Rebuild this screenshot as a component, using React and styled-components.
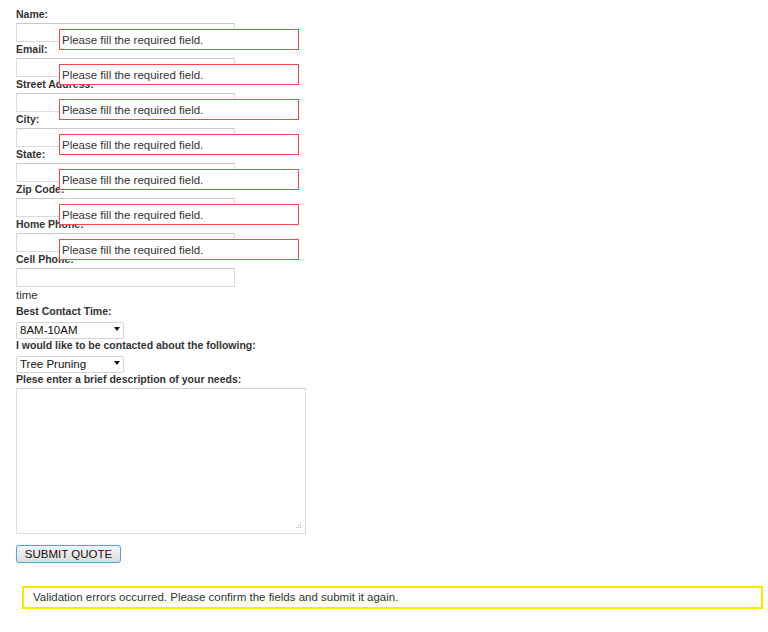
import React from 'react'
import styled, { createGlobalStyle } from 'styled-components'

const GlobalStyle = createGlobalStyle`
  html, body {
    margin: 0;
    padding: 0;
    background: #fff;
  }
  body {
    font-family: "Liberation Sans", Arial, sans-serif;
    color: #333;
  }
`

const fields = [
  { label: 'Name:', error: true },
  { label: 'Email:', error: true },
  { label: 'Street Address:', error: true },
  { label: 'City:', error: true },
  { label: 'State:', error: true },
  { label: 'Zip Code:', error: true },
  { label: 'Home Phone:', error: true },
  { label: 'Cell Phone:', error: false },
]

const App = () => {
  return (
    <>
      <GlobalStyle />
      <Page>
        <Form onSubmit={(e) => e.preventDefault()}>
          {fields.map((field) => (
            <Field key={field.label}>
              <Label>{field.label}</Label>
              <InputWrap>
                <TextInput type="text" />
                {field.error && <ErrorTip>Please fill the required field.</ErrorTip>}
              </InputWrap>
            </Field>
          ))}

          <Plain>time</Plain>
          <Label>Best Contact Time:</Label>
          <SelectWrap>
            <Select defaultValue="8AM-10AM">
              <option>8AM-10AM</option>
              <option>10AM-12PM</option>
              <option>12PM-2PM</option>
              <option>2PM-4PM</option>
              <option>4PM-6PM</option>
            </Select>
          </SelectWrap>

          <Label>I would like to be contacted about the following:</Label>
          <SelectWrap>
            <Select defaultValue="Tree Pruning">
              <option>Tree Pruning</option>
              <option>Tree Removal</option>
              <option>Stump Grinding</option>
            </Select>
          </SelectWrap>

          <Label>Plese enter a brief description of your needs:</Label>
          <AreaWrap>
            <TextArea />
            <Grip>
              <svg width="7" height="7" viewBox="0 0 7 7">
                <rect x="5" y="0" width="1" height="1" fill="#bbb" />
                <rect x="3" y="2" width="1" height="1" fill="#bbb" />
                <rect x="5" y="2" width="1" height="1" fill="#bbb" />
                <rect x="1" y="4" width="1" height="1" fill="#bbb" />
                <rect x="3" y="4" width="1" height="1" fill="#bbb" />
                <rect x="5" y="4" width="1" height="1" fill="#bbb" />
              </svg>
            </Grip>
          </AreaWrap>

          <SubmitButton type="submit">SUBMIT QUOTE</SubmitButton>
        </Form>

        <Notice>Validation errors occurred. Please confirm the fields and submit it again.</Notice>
      </Page>
    </>
  )
}

export default App

const Page = styled.div`
  padding: 6px 5px 0 16px;
`

const Form = styled.form`
  display: flex;
  flex-direction: column;
  align-items: flex-start;
`

const Field = styled.div`
  display: flex;
  flex-direction: column;
`

const Label = styled.label`
  display: block;
  font-size: 10.5px;
  font-weight: bold;
  line-height: 16px;
  color: #333;
`

const Plain = styled.div`
  margin-top: 1px;
  font-size: 11.5px;
  line-height: 16px;
  color: #333;
`

const InputWrap = styled.div`
  position: relative;
  width: 219px;
  height: 19px;
`

const TextInput = styled.input`
  box-sizing: border-box;
  width: 219px;
  height: 19px;
  margin: 0;
  padding: 1px 3px;
  border: 1px solid #dcdcdc;
  border-top-color: #c8c8c8;
  font-family: "Liberation Sans", Arial, sans-serif;
  font-size: 11.5px;
  background: #fff;
  outline: none;
`

const ErrorTip = styled.div`
  position: absolute;
  left: 43px;
  top: 7px;
  z-index: 2;
  box-sizing: border-box;
  width: 240px;
  height: 21px;
  padding: 0 2px;
  border: 1px solid #f04848;
  background: #fff;
  font-size: 11.5px;
  line-height: 20px;
  color: #333;
  white-space: nowrap;
`

const SelectWrap = styled.div`
  position: relative;
  width: 108px;
  height: 17px;
  margin: 1px 0 0;

  &::after {
    content: '';
    position: absolute;
    right: 4px;
    top: 7px;
    border-left: 3.5px solid transparent;
    border-right: 3.5px solid transparent;
    border-top: 4px solid #111;
    pointer-events: none;
  }
`

const Select = styled.select`
  appearance: none;
  -webkit-appearance: none;
  box-sizing: border-box;
  width: 108px;
  height: 17px;
  margin: 0;
  padding: 0 0 0 3px;
  border: 1px solid #d4d4d4;
  border-radius: 2px;
  background: #fff;
  font-family: "Liberation Sans", Arial, sans-serif;
  font-size: 11.5px;
  line-height: 15px;
  color: #111;
  outline: none;
`

const AreaWrap = styled.div`
  position: relative;
  width: 290px;
  height: 146px;
  margin: 1px 0 0;
`

const TextArea = styled.textarea`
  display: block;
  box-sizing: border-box;
  width: 290px;
  height: 146px;
  margin: 0;
  padding: 2px;
  border: 1px solid #dcdcdc;
  border-top-color: #cfcfcf;
  font-family: "Liberation Sans", Arial, sans-serif;
  font-size: 11.5px;
  outline: none;
  resize: none;
`

const Grip = styled.span`
  position: absolute;
  right: 4px;
  bottom: 4px;
  display: flex;
  pointer-events: none;
`

const SubmitButton = styled.button`
  box-sizing: border-box;
  width: 105px;
  height: 18px;
  margin-top: 11px;
  padding: 0;
  border: 1px solid #4fa7dc;
  border-radius: 3px;
  background: linear-gradient(#f6f6f6, #dddddd);
  box-shadow: 0 0 1px #8cc8ee;
  font-family: "Liberation Sans", Arial, sans-serif;
  font-size: 11.5px;
  line-height: 16px;
  color: #111;
  cursor: pointer;
`

const Notice = styled.div`
  box-sizing: border-box;
  height: 23px;
  margin: 23px 0 0 6px;
  padding: 0 9px;
  border: 2px solid #ffe600;
  font-size: 11.5px;
  line-height: 19px;
  color: #333;
`
